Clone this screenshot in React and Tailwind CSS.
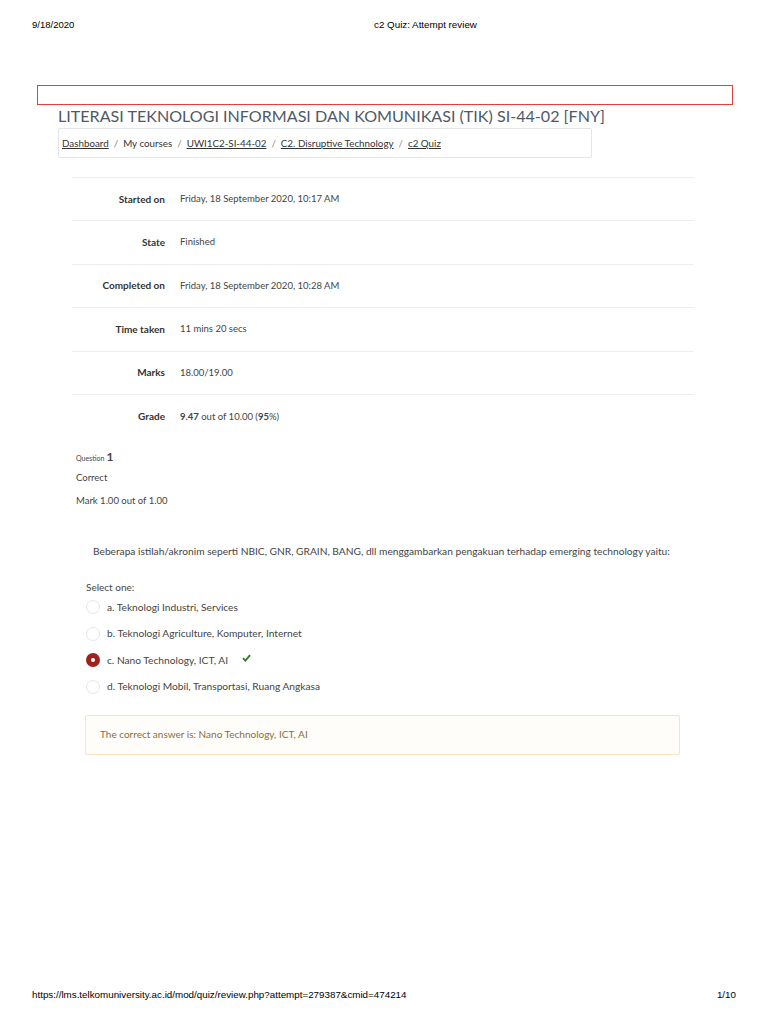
import React from "react";

const rows = [
  { label: "Started on", value: "Friday, 18 September 2020, 10:17 AM" },
  { label: "State", value: "Finished" },
  { label: "Completed on", value: "Friday, 18 September 2020, 10:28 AM" },
  { label: "Time taken", value: "11 mins 20 secs" },
  { label: "Marks", value: "18.00/19.00" },
  {
    label: "Grade",
    value: (
      <>
        <b>9.47</b> out of 10.00 (<b>95</b>%)
      </>
    ),
  },
];

const options = [
  { text: "a. Teknologi Industri, Services" },
  { text: "b. Teknologi Agriculture, Komputer, Internet" },
  { text: "c. Nano Technology, ICT, AI", checked: true },
  { text: "d. Teknologi Mobil, Transportasi, Ruang Angkasa" },
];

function Radio({ checked }) {
  if (checked) {
    return (
      <span className="flex h-[14px] w-[14px] shrink-0 items-center justify-center rounded-full bg-[#a0201c]">
        <span className="h-[4px] w-[4px] rounded-full bg-white" />
      </span>
    );
  }
  return <span className="h-[14px] w-[14px] shrink-0 rounded-full border border-[#e6e6e6] bg-white" />;
}

export default function App() {
  return (
    <div className="relative h-[1024px] w-[768px] overflow-hidden bg-white">
      {/* print header */}
      <div className="flex h-[48px] items-start px-[32px] pt-[18px] font-['Liberation_Sans',Arial,sans-serif] text-[9.5px] text-black">
        <span className="w-[342px]">9/18/2020</span>
        <span className="text-[9.8px]">c2 Quiz: Attempt review</span>
      </div>

      <div className="font-['Lato','Open_Sans',sans-serif] text-[#333]">
        {/* red outline box */}
        <div className="ml-[37px] mt-[37px] h-[20px] w-[696px] border border-[#e53e3e]" />

        {/* course title */}
        <h1 className="ml-[58px] mt-[1px] text-[16.1px] leading-[20px] text-[#4f5966]">
          LITERASI TEKNOLOGI INFORMASI DAN KOMUNIKASI (TIK) SI-44-02 [FNY]
        </h1>

        {/* breadcrumb */}
        <div className="ml-[58px] mt-[2px] flex h-[30px] w-[534px] items-center gap-[5px] rounded-[2px] border border-[#e3e6e8] px-[3px] text-[9.8px] text-[#333]">
          <a className="underline">Dashboard</a>
          <span className="text-[#888]">/</span>
          <span>My courses</span>
          <span className="text-[#888]">/</span>
          <a className="underline">UWI1C2-SI-44-02</a>
          <span className="text-[#888]">/</span>
          <a className="underline">C2. Disruptive Technology</a>
          <span className="text-[#888]">/</span>
          <a className="underline">c2 Quiz</a>
        </div>

        {/* attempt summary */}
        <div className="ml-[72px] mt-[19px] w-[622px] border-t border-[#eeeeee]">
          {rows.map((r) => (
            <div
              key={r.label}
              className="flex h-[43.4px] items-center border-b border-[#eeeeee] text-[9.5px] last:border-b-0"
            >
              <div className="w-[93px] text-right text-[10px] font-bold text-[#333]">{r.label}</div>
              <div className="ml-[15px] text-[#444]">{r.value}</div>
            </div>
          ))}
        </div>

        {/* question info */}
        <div className="ml-[76px] mt-[12px] text-[9.5px] text-[#444]">
          <div className="flex items-baseline gap-[2px] leading-[14px]">
            <span className="text-[7px]">Question</span>
            <span className="text-[12px] font-bold">1</span>
          </div>
          <div className="mt-[7px] leading-[12px]">Correct</div>
          <div className="mt-[11px] leading-[12px]">Mark 1.00 out of 1.00</div>
        </div>

        {/* question text */}
        <div className="ml-[93px] mt-[38px] text-[10.2px] leading-[12px] text-[#444]">
          Beberapa istilah/akronim seperti NBIC, GNR, GRAIN, BANG, dll menggambarkan pengakuan terhadap emerging technology yaitu:
        </div>

        <div className="ml-[86px] mt-[24px] text-[10px] leading-[12px] text-[#444]">Select one:</div>

        <div className="ml-[86px] mt-[7px] flex flex-col gap-[12.5px] text-[10.2px] text-[#444]">
          {options.map((o) => (
            <div key={o.text} className="flex h-[14px] items-center">
              <Radio checked={o.checked} />
              <span className="ml-[7px]">{o.text}</span>
              {o.checked && (
                <svg className="ml-[14px] mb-[4px]" width="9" height="8" viewBox="0 0 9 8">
                  <path d="M1 4.2 L3.4 6.6 L8 1.2" fill="none" stroke="#2d7a2d" strokeWidth="1.8" />
                </svg>
              )}
            </div>
          ))}
        </div>

        {/* feedback */}
        <div className="ml-[85px] mt-[21px] flex h-[40px] w-[595px] items-center rounded-[2px] border border-[#fbe3c0] bg-[#fffdf9] px-[14px] text-[10px] text-[#8a6d3b]">
          The correct answer is: Nano Technology, ICT, AI
        </div>
      </div>

      {/* print footer */}
      <div className="absolute bottom-[21px] left-0 flex w-full justify-between px-[32px] font-['Liberation_Sans',Arial,sans-serif] text-[9.8px] text-black">
        <span>https://lms.telkomuniversity.ac.id/mod/quiz/review.php?attempt=279387&amp;cmid=474214</span>
        <span>1/10</span>
      </div>
    </div>
  );
}
